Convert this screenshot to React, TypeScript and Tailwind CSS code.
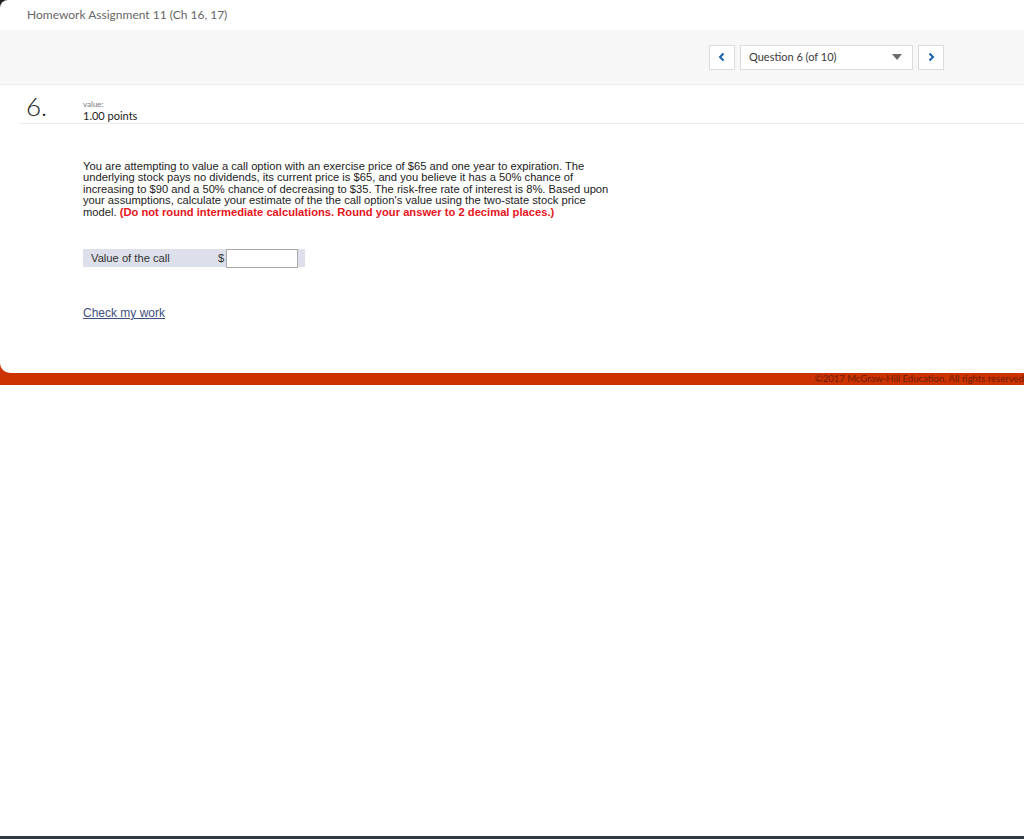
export default function App() {
  return (
    <div className="h-[839px] bg-white flex flex-col font-['Lato',sans-serif]">
      <div className="bg-[linear-gradient(to_bottom,#1f1f1f_0,#1f1f1f_50%,#cc3300_50%)]">
        <div className="bg-white rounded-tl-[8px] rounded-bl-[10px] h-[373px] flex flex-col">
          <header className="h-[30px] flex items-center pl-[27px] text-[12px] text-[#666]">
            Homework Assignment 11 (Ch 16, 17)
          </header>
          <div className="h-[55px] bg-[#f7f7f7] border-b border-[#ececec] flex items-center justify-end pr-[80px] gap-[5px]">
            <button className="w-[26px] h-[25px] bg-white border border-[#dcdcdc] flex items-center justify-center text-[#1b5fae]">
              <svg width="8" height="10" viewBox="0 0 8 10">
                <path d="M5.5 1.5 2 5l3.5 3.5" fill="none" stroke="currentColor" strokeWidth="2" />
              </svg>
            </button>
            <div className="w-[173px] h-[25px] bg-white border border-[#dcdcdc] flex items-center justify-between pl-[8px] pr-[10px] text-[11px] text-[#3a3a3a]">
              <span>Question 6 (of 10)</span>
              <svg width="10" height="6" viewBox="0 0 10 6">
                <path d="M0 0h10L5 6z" fill="#6d6d6d" />
              </svg>
            </div>
            <button className="w-[26px] h-[25px] bg-white border border-[#dcdcdc] flex items-center justify-center text-[#1b5fae]">
              <svg width="8" height="10" viewBox="0 0 8 10">
                <path d="M2.5 1.5 6 5 2.5 8.5" fill="none" stroke="currentColor" strokeWidth="2" />
              </svg>
            </button>
          </div>
          <div className="ml-[20px] h-[39px] border-b border-[#ececec] flex items-start pt-[8px]">
            <div className="w-[63px] pl-[6px] text-[26px] leading-none font-light text-[#222]">6.</div>
            <div className="flex flex-col leading-[12px] pt-[5px]">
              <span className="text-[8px] text-[#777]">value:</span>
              <span className="text-[11px] text-[#222]">1.00 points</span>
            </div>
          </div>
          <div className="pl-[83px] pt-[37px] font-['Liberation_Sans',Arial,sans-serif]">
            <p className="w-[530px] text-[11.2px] leading-[11.4px] text-[#222]">
              You are attempting to value a call option with an exercise price of $65 and one year to expiration. The
              underlying stock pays no dividends, its current price is $65, and you believe it has a 50% chance of
              increasing to $90 and a 50% chance of decreasing to $35. The risk-free rate of interest is 8%. Based upon
              your assumptions, calculate your estimate of the the call option's value using the two-state stock price
              model.{" "}
              <span className="text-[#e4141b] font-bold">
                (Do not round intermediate calculations. Round your answer to 2 decimal places.)
              </span>
            </p>
            <div className="mt-[31px] w-[222px] h-[18px] bg-[#dde0ea] flex items-center text-[11.2px] text-[#333]">
              <span className="pl-[8px] w-[135px]">Value of the call</span>
              <span className="w-[8px]">$</span>
              <div className="w-[72px] h-[19px] bg-white border border-[#a9a9a9]" />
            </div>
            <a className="block mt-[37px] text-[12px] text-[#3f4f7f] underline">Check my work</a>
          </div>
        </div>
      </div>
      <div className="h-[12px] bg-[#cc3300] overflow-hidden whitespace-nowrap flex items-center justify-end">
        <span className="text-[9.5px] text-[#6e1c00] -mr-[2px]">©2017 McGraw-Hill Education. All rights reserved.</span>
      </div>
      <div className="flex-1" />
      <div className="h-[3px] bg-[#2f3a44]" />
    </div>
  )
}
